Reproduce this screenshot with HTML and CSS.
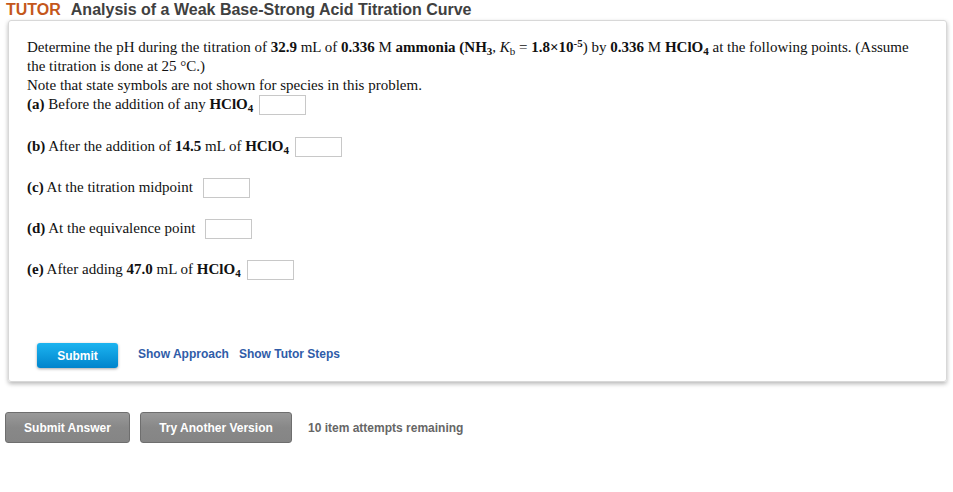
FILE: index.html
```html
<!DOCTYPE html>
<html>
<head>
<meta charset="utf-8">
<link rel="stylesheet" href="styles.css">
</head>
<body>
<div class="title"><span class="tutor">TUTOR</span><span class="name">Analysis of a Weak Base-Strong Acid Titration Curve</span></div>
<div class="panel">
  <div class="q">
    <p class="intro">Determine the pH during the titration of <b>32.9</b> mL of <b>0.336</b> M <b>ammonia</b> <b>(NH<sub>3</sub></b>, <i>K</i><sub>b</sub> = <b>1.8×10<sup>-5</sup></b>) by <b>0.336</b> M <b>HClO<sub>4</sub></b> at the following points. (Assume the titration is done at 25 °C.)<br>Note that state symbols are not shown for species in this problem.</p>
    <div class="part first"><b>(a)</b> Before the addition of any <b>HClO<sub>4</sub></b> <span class="box"></span></div>
    <div class="part second"><b>(b)</b> After the addition of <b>14.5</b> mL of <b>HClO<sub>4</sub></b> <span class="box"></span></div>
    <div class="part"><b>(c)</b> At the titration midpoint <span class="box"></span></div>
    <div class="part"><b>(d)</b> At the equivalence point <span class="box"></span></div>
    <div class="part"><b>(e)</b> After adding <b>47.0</b> mL of <b>HClO<sub>4</sub></b> <span class="box"></span></div>
  </div>
  <div class="actions">
    <span class="submit">Submit</span>
    <span class="link">Show Approach</span>
    <span class="link">Show Tutor Steps</span>
  </div>
</div>
<div class="footer">
  <span class="gbtn w1">Submit Answer</span>
  <span class="gbtn w2">Try Another Version</span>
  <span class="remain">10 item attempts remaining</span>
</div>
</body>
</html>
```
FILE: styles.css
```css
html, body { margin: 0; padding: 0; background: #fff; }
body { font-family: "Liberation Sans", Arial, sans-serif; }
.title { height: 20px; line-height: 19px; padding-left: 6px; font-size: 16px; font-weight: bold; }
.tutor { color: #c4571b; margin-right: 10px; }
.name { color: #404040; }
.panel {
  margin-left: 8px; width: 937px; height: 360px;
  border: 1px solid #d8d8d8; border-radius: 3px;
  box-shadow: 0 2px 4px rgba(0,0,0,0.28);
  box-sizing: content-box;
  display: flex; flex-direction: column;
}
.q { padding: 17px 0 0 18px; font-family: "Liberation Serif", "Times New Roman", serif; font-size: 15px; color: #111; line-height: 19px; }
.intro { margin: 0; padding-right: 30px; }
sub, sup { font-size: 11px; line-height: 0; }
sub { vertical-align: -3px; }
sup { vertical-align: 5px; }
.part { margin-top: 22px; height: 19px; display: flex; align-items: center; white-space: pre; }
.part.first { margin-top: 0; }
.part.second { margin-top: 23px; }
.box { display: inline-block; width: 45px; height: 18px; border: 1px solid #c8c8c8; margin-left: 6px; box-sizing: content-box; }
.actions { display: flex; align-items: center; margin-top: 64px; padding-left: 28px; }
.submit {
  width: 81px; height: 25px; border-radius: 3px;
  background: linear-gradient(#1cb4f0, #0084cc);
  color: #fff; font-size: 12px; font-weight: bold;
  display: flex; align-items: center; justify-content: center;
  box-shadow: 0 1px 3px rgba(0,0,0,0.35);
  margin-right: 20px;
}
.link { color: #2f5ca8; font-size: 12px; font-weight: bold; margin-right: 10px; margin-top: -3px; }
.footer { display: flex; align-items: center; margin-top: 30px; padding-left: 5px; }
.gbtn {
  height: 29px; border: 1px solid #6e6e6e; border-radius: 3px;
  background: linear-gradient(#999, #888 50%, #858585);
  color: #fff; font-size: 12px; font-weight: bold;
  display: flex; align-items: center; justify-content: center;
  box-sizing: content-box;
}
.w1 { width: 123px; margin-right: 10px; }
.w2 { width: 150px; margin-right: 16px; }
.remain { color: #666; font-size: 12px; font-weight: bold; }
```
